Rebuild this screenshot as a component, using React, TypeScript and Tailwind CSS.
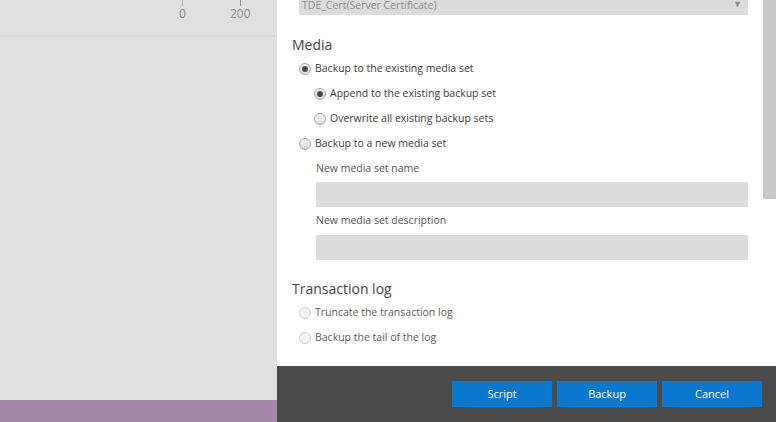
import React from "react";

function Radio({ checked, disabled }: { checked?: boolean; disabled?: boolean }) {
  return (
    <span
      className={
        "flex h-[12px] w-[12px] shrink-0 items-center justify-center rounded-full border " +
        (disabled
          ? "border-[#d0d0d0] bg-[#f2f2f2]"
          : "border-[#a8a8a8] bg-gradient-to-b from-[#f4f4f4] to-[#dcdcdc]")
      }
    >
      {checked && <span className="h-[6px] w-[6px] rounded-full bg-[#4a4a4a]" />}
    </span>
  );
}

function Option({
  label,
  checked,
  disabled,
  indent,
}: {
  label: string;
  checked?: boolean;
  disabled?: boolean;
  indent?: boolean;
}) {
  return (
    <div className={"flex h-[25px] items-center gap-[4px] " + (indent ? "pl-[22px]" : "pl-[7px]")}>
      <Radio checked={checked} disabled={disabled} />
      <span className={disabled ? "text-[#5a5a5a]" : "text-[#3c3c3c]"}>{label}</span>
    </div>
  );
}

function Button({ children }: { children: React.ReactNode }) {
  return (
    <button className="h-[26px] w-[100px] bg-[#0a78cf] text-[11px] text-white">{children}</button>
  );
}

export default function App() {
  return (
    <div
      className="flex h-[422px] w-[776px] overflow-hidden text-[10.5px]"
      style={{ fontFamily: '"Open Sans", "Noto Sans", sans-serif' }}
    >
      {/* chart side */}
      <div className="flex w-[277px] shrink-0 flex-col bg-[#e0e0e0]">
        <div className="relative h-[35px]">
          <div className="absolute left-[182px] top-0 h-[6px] w-px bg-[#b8b8b8]" />
          <div className="absolute left-[240px] top-0 h-[6px] w-px bg-[#7f9ba6]" />
          <span className="absolute left-[179px] top-[5px] text-[12px] text-[#8a8a8a]">0</span>
          <span className="absolute left-[230px] top-[5px] text-[12px] text-[#8a8a8a]">200</span>
        </div>
        <div className="h-[2px] bg-[#d6d6d6]" />
        <div className="flex-1" />
        <div className="h-[22px] bg-[#a688ad]" />
      </div>

      {/* dialog side */}
      <div className="flex flex-1 flex-col bg-white">
        <div className="flex h-[366px]">
          <div className="flex-1 pl-[15px] pr-[15px]">
            <div className="ml-[7px] flex h-[15px] items-start justify-between overflow-hidden bg-[#dcdcdc] pl-[3px] pr-[6px]">
              <span className="-mt-[5px] leading-[20px] text-[#8c8c8c]">TDE_Cert(Server Certificate)</span>
              <span className="-mt-[3px] text-[9px] text-[#8c8c8c]">▼</span>
            </div>

            <div className="mt-[20px] h-[21px] text-[14px] leading-[20px] text-[#444]">Media</div>
            <Option label="Backup to the existing media set" checked />
            <Option label="Append to the existing backup set" checked indent />
            <Option label="Overwrite all existing backup sets" indent />
            <Option label="Backup to a new media set" />

            <div className="ml-[24px]">
              <div className="flex h-[25px] items-center text-[#555]">New media set name</div>
              <div className="mt-[1px] h-[25px] bg-[#dcdcdc]" />
              <div className="flex h-[28px] items-center text-[#555]">New media set description</div>
              <div className="h-[25px] bg-[#dcdcdc]" />
            </div>

            <div className="mt-[19px] h-[21px] text-[14px] leading-[20px] text-[#444]">Transaction log</div>
            <Option label="Truncate the transaction log" disabled />
            <Option label="Backup the tail of the log" disabled />
          </div>
          <div className="w-[13px] shrink-0">
            <div className="h-[199px] bg-[#c8c8c8]" />
          </div>
        </div>
        <div className="flex flex-1 items-start justify-end gap-[5px] bg-[#4a4a4a] pr-[14px] pt-[15px]">
          <Button>Script</Button>
          <Button>Backup</Button>
          <Button>Cancel</Button>
        </div>
      </div>
    </div>
  );
}
